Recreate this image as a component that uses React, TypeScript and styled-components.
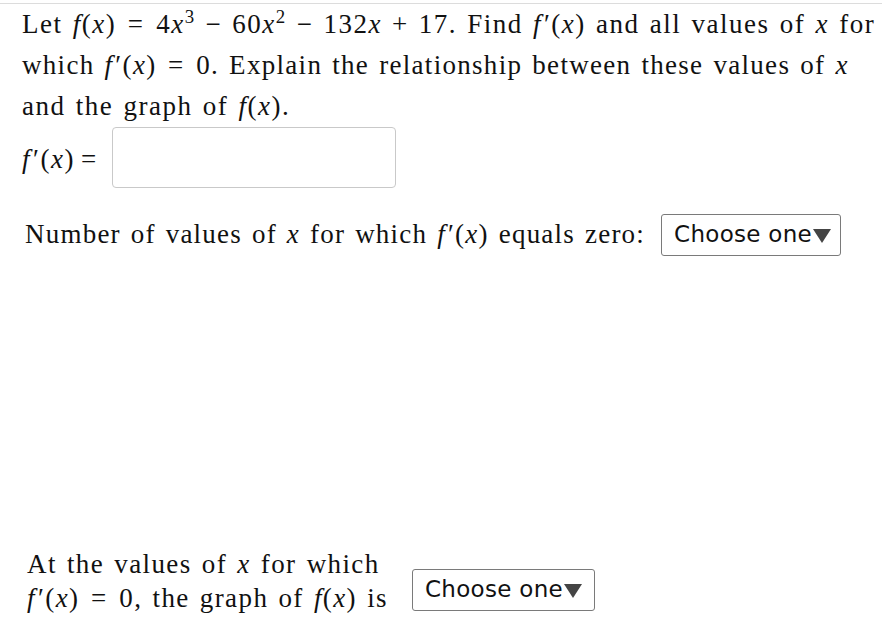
import React from "react";
import styled, { createGlobalStyle } from "styled-components";

const GlobalStyle = createGlobalStyle`
  body {
    margin: 0;
    background: #ffffff;
  }
`;

const Page = styled.div`
  margin-top: 3px;
  border-top: 1px solid #dcdcdc;
  padding: 0 0 20px 22px;
  font-family: "Liberation Serif", "Times New Roman", serif;
  font-size: 27px;
  letter-spacing: 1.5px;
  word-spacing: 2px;
  color: #111;
`;

const Prompt = styled.p`
  margin: 0;
  line-height: 41px;
`;

const Tight = styled.span<{ $ls: number }>`
  letter-spacing: ${(p) => p.$ls}px;
`;

const V = styled.i`
  font-style: italic;
`;

const Prime = styled.span`
  margin-left: 2px;
`;

const Sup = styled.sup`
  font-size: 0.7em;
  line-height: 0;
  vertical-align: 0.55em;
`;

const Op = styled.span<{ $rel?: boolean }>`
  margin: 0 ${(p) => (p.$rel ? "0.43em" : "0.37em")};
`;

const AnswerRow = styled.div`
  display: flex;
  align-items: center;
`;

const Label = styled.span`
  margin-right: 14px;
  padding-top: 4px;
`;

const Equals = styled.span`
  margin-left: 6px;
`;

const TextInput = styled.input`
  box-sizing: border-box;
  width: 284px;
  height: 61px;
  border: 1px solid #c9c9c9;
  border-radius: 4px;
  background: #fff;
  outline: none;
`;

const QuestionRow = styled.div`
  display: flex;
  align-items: center;
  margin-top: 26px;
  padding-left: 3px;
`;

const QuestionText = styled.span`
  margin-right: 16px;
  letter-spacing: 1.22px;
  padding-bottom: 2px;
`;

const Select = styled.div<{ $w: number }>`
  box-sizing: border-box;
  display: inline-flex;
  align-items: center;
  flex-shrink: 0;
  width: ${(p) => p.$w}px;
  height: 42px;
  padding: 0 0 2px 12px;
  border: 1px solid #7a7a7a;
  border-radius: 3px;
  font-family: "DejaVu Sans", "Liberation Sans", sans-serif;
  font-size: 23px;
  letter-spacing: 0.3px;
  word-spacing: 0;
  color: #111;
  background: #fff;
`;

const Arrow = styled.svg`
  width: 18px;
  height: 14px;
  margin-left: 1px;
  margin-top: 3px;
  fill: #444;
`;

const Footer = styled.div`
  display: flex;
  align-items: flex-start;
  margin-top: 291px;
  padding-left: 5px;
`;

const FooterText = styled.p`
  margin: 0 24px 0 0;
  line-height: 34px;
  letter-spacing: 1.4px;
`;

const FooterSelect = styled.div`
  margin-top: 22px;
`;

const ChooseOne = ({ w }: { w: number }) => (
  <Select $w={w}>
    Choose one
    <Arrow viewBox="0 0 18 14">
      <path d="M0 0 H18 L9 14 Z" />
    </Arrow>
  </Select>
);

const Fx = ({ prime }: { prime?: boolean }) => (
  <>
    <V>f</V>
    {prime ? <Prime>′</Prime> : null}(<V>x</V>)
  </>
);

export default function App() {
  return (
    <>
      <GlobalStyle />
      <Page>
        <Prompt>
          Let <Fx />
          <Op $rel>=</Op>4<V>x</V>
          <Sup>3</Sup>
          <Op>−</Op>60<V>x</V>
          <Sup>2</Sup>
          <Op>−</Op>132<V>x</V>
          <Op>+</Op>17. Find <Fx prime /> and all values of <V>x</V> for
          <br />
          <Tight $ls={1.3}>
            which <Fx prime />
            <Op $rel>=</Op>0. Explain the relationship between these values
            of <V>x</V>
          </Tight>
          <br />
          and the graph of <Fx />.
        </Prompt>
        <AnswerRow>
          <Label>
            <Fx prime />
            <Equals>=</Equals>
          </Label>
          <TextInput aria-label="f'(x)" />
        </AnswerRow>
        <QuestionRow>
          <QuestionText>
            Number of values of <V>x</V> for which <Fx prime /> equals zero:
          </QuestionText>
          <ChooseOne w={180} />
        </QuestionRow>
        <Footer>
          <FooterText>
            At the values of <V>x</V> for which
            <br />
            <Fx prime />
            <Op $rel>=</Op>0, the graph of <Fx /> is
          </FooterText>
          <FooterSelect>
            <ChooseOne w={183} />
          </FooterSelect>
        </Footer>
      </Page>
    </>
  );
}
